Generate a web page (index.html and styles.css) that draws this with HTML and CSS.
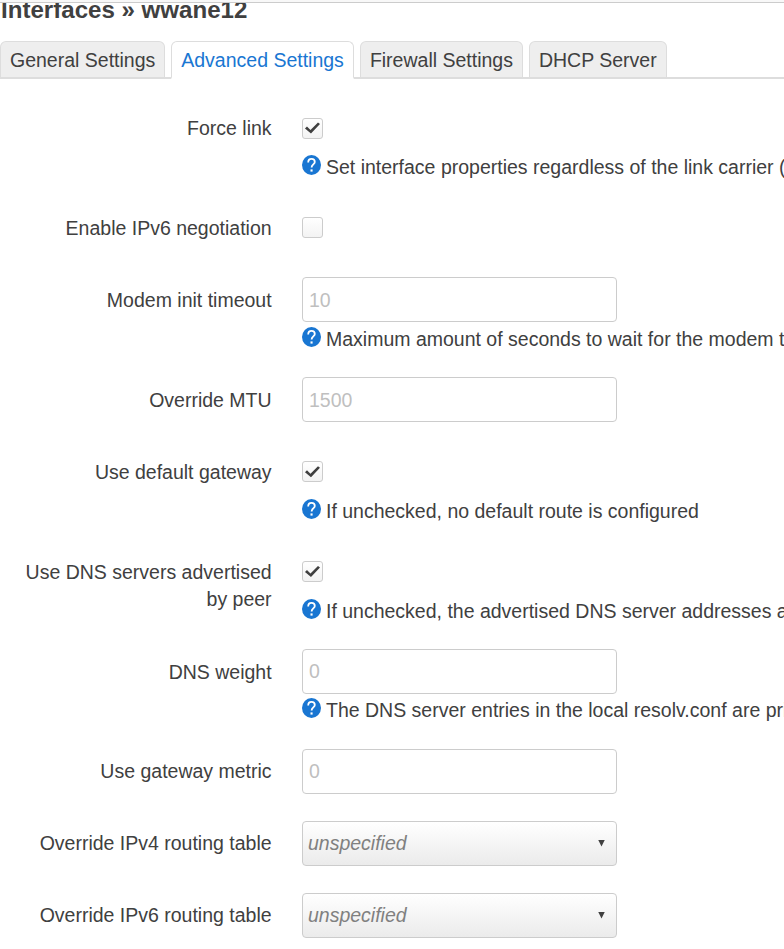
FILE: index.html
```
<!DOCTYPE html>
<html lang="en">

<head>
    <meta charset="UTF-8">
    <meta name="viewport" content="width=device-width, initial-scale=1.0">
    <title>Interfaces » wwane12</title>
    <link rel="stylesheet" href="styles.css">
</head>

<body>
    <svg class="defs" width="0" height="0">
        <symbol id="help" viewBox="0 0 20 20">
            <ellipse cx="9.5" cy="10" rx="9.5" ry="10" fill="#1976d2" />
            <path d="M6.2 7.4C6.2 5 7.6 3.9 9.5 3.9s3.3 1.1 3.3 3c0 2.4-3.2 2.7-3.2 5.5" fill="none" stroke="#fff" stroke-width="1.8" />
            <rect x="8.5" y="14.4" width="2.1" height="2.2" fill="#fff" />
        </symbol>
    </svg>

    <header class="topbar"></header>

    <div class="title">
        <h2>Interfaces » wwane12</h2>
    </div>

    <ul class="tabs">
        <li class="tab">General Settings</li>
        <li class="tab active">Advanced Settings</li>
        <li class="tab">Firewall Settings</li>
        <li class="tab">DHCP Server</li>
    </ul>

    <form class="settings">
        <div class="row">
            <label for="force_link">Force link</label>
            <div class="field">
                <div class="control"><input type="checkbox" id="force_link" checked></div>
                <div class="help"><svg><use href="#help" /></svg>Set interface properties regardless of the link carrier (If set, carrier sense events do not invoke hotplug handlers).</div>
            </div>
        </div>

        <div class="row">
            <label for="ipv6">Enable IPv6 negotiation</label>
            <div class="field">
                <div class="control"><input type="checkbox" id="ipv6"></div>
            </div>
        </div>

        <div class="row">
            <label for="maxwait">Modem init timeout</label>
            <div class="field">
                <div class="control"><input type="text" id="maxwait" placeholder="10"></div>
                <div class="help"><svg><use href="#help" /></svg>Maximum amount of seconds to wait for the modem to become ready</div>
            </div>
        </div>

        <div class="row">
            <label for="mtu">Override MTU</label>
            <div class="field">
                <div class="control"><input type="text" id="mtu" placeholder="1500"></div>
            </div>
        </div>

        <div class="row">
            <label for="defaultroute">Use default gateway</label>
            <div class="field">
                <div class="control"><input type="checkbox" id="defaultroute" checked></div>
                <div class="help"><svg><use href="#help" /></svg>If unchecked, no default route is configured</div>
            </div>
        </div>

        <div class="row">
            <label for="peerdns">Use DNS servers advertised by peer</label>
            <div class="field">
                <div class="control"><input type="checkbox" id="peerdns" checked></div>
                <div class="help"><svg><use href="#help" /></svg>If unchecked, the advertised DNS server addresses are ignored</div>
            </div>
        </div>

        <div class="row">
            <label for="dns_metric">DNS weight</label>
            <div class="field">
                <div class="control"><input type="text" id="dns_metric" placeholder="0"></div>
                <div class="help"><svg><use href="#help" /></svg>The DNS server entries in the local resolv.conf are primarily sorted by the weight specified here</div>
            </div>
        </div>

        <div class="row">
            <label for="metric">Use gateway metric</label>
            <div class="field">
                <div class="control"><input type="text" id="metric" placeholder="0"></div>
            </div>
        </div>

        <div class="row">
            <label>Override IPv4 routing table</label>
            <div class="field">
                <div class="dropdown"><em>unspecified</em><span class="arrow"></span></div>
            </div>
        </div>

        <div class="row">
            <label>Override IPv6 routing table</label>
            <div class="field">
                <div class="dropdown"><em>unspecified</em><span class="arrow"></span></div>
            </div>
        </div>
    </form>
</body>

</html>
```

FILE: styles.css
```
* {
    box-sizing: border-box;
}

body {
    margin: 0;
    height: 949px;
    overflow: hidden;
    background-color: #fff;
    color: #404040;
    font-family: "Liberation Sans", Arial, sans-serif;
    font-size: 19.5px;
    line-height: 27px;
}

.defs {
    display: block;
}

.topbar {
    height: 3px;
    background-color: #f8f8f8;
    border-bottom: 1px solid #ccc;
}

/* the heading is scrolled partly under the top bar */
.title {
    height: 38px;
    overflow: hidden;
}

h2 {
    margin: -11px 0 0 1px;
    font-size: 24.1px;
    line-height: 36px;
}

.tabs {
    display: flex;
    gap: 6px;
    height: 38px;
    margin: 0;
    padding: 0;
    list-style: none;
    box-shadow: inset 0 -2px #ddd;
}

.tab {
    padding: 5px 9px 0;
    border: 1px solid #ddd;
    border-bottom: 2px solid #ddd;
    border-radius: 6px 6px 0 0;
    background-color: #eee;
    white-space: nowrap;
}

.tab.active {
    background-color: #fff;
    border-bottom-color: #fff;
    color: #1976d2;
}

.settings {
    padding-top: 26.4px;
}

.row {
    display: flex;
    margin-bottom: 27px;
}

.row label {
    flex: none;
    width: 271.6px;
    padding: 9.75px 0 0 20px;
    margin-bottom: -20px;
    text-align: right;
}

.field {
    flex: none;
    margin-left: 30.4px;
}

.control {
    display: flex;
    align-items: flex-start;
    height: 45px;
}

input[type="text"],
.dropdown {
    width: 315px;
    height: 45px;
    padding: 0 6px;
    border: 1px solid #ccc;
    border-radius: 4px;
    background-color: #fff;
    font: inherit;
}

input[type="text"] {
    padding-top: 1px;
}

input::placeholder {
    color: #bfbfbf;
}

input[type="checkbox"] {
    appearance: none;
    width: 21px;
    height: 21px;
    margin: 12.2px 0 0;
    border: 1px solid #ccc;
    border-radius: 3px;
    background: linear-gradient(#fff, #f3f3f3);
}

input[type="checkbox"]:checked::before {
    content: "";
    display: block;
    width: 19px;
    height: 19px;
    background-color: #404040;
    clip-path: polygon(2px 10px, 4px 8px, 7.5px 11.5px, 15px 4px, 17px 5.5px, 8px 15px);
}

.help {
    display: flex;
    height: 27.85px;
    padding-top: 3.65px;
    white-space: nowrap;
}

.help svg {
    flex: none;
    width: 20px;
    height: 20px;
    margin: 1px 4px 0 0;
}

.dropdown {
    display: flex;
    align-items: center;
    justify-content: space-between;
    padding: 0 11px 0 5px;
    background: linear-gradient(#fff, #ebebeb);
}

.dropdown em {
    color: #808080;
}

.arrow {
    width: 7px;
    height: 7px;
    background-color: #404040;
    clip-path: polygon(0 0, 100% 0, 50% 100%);
}
```
